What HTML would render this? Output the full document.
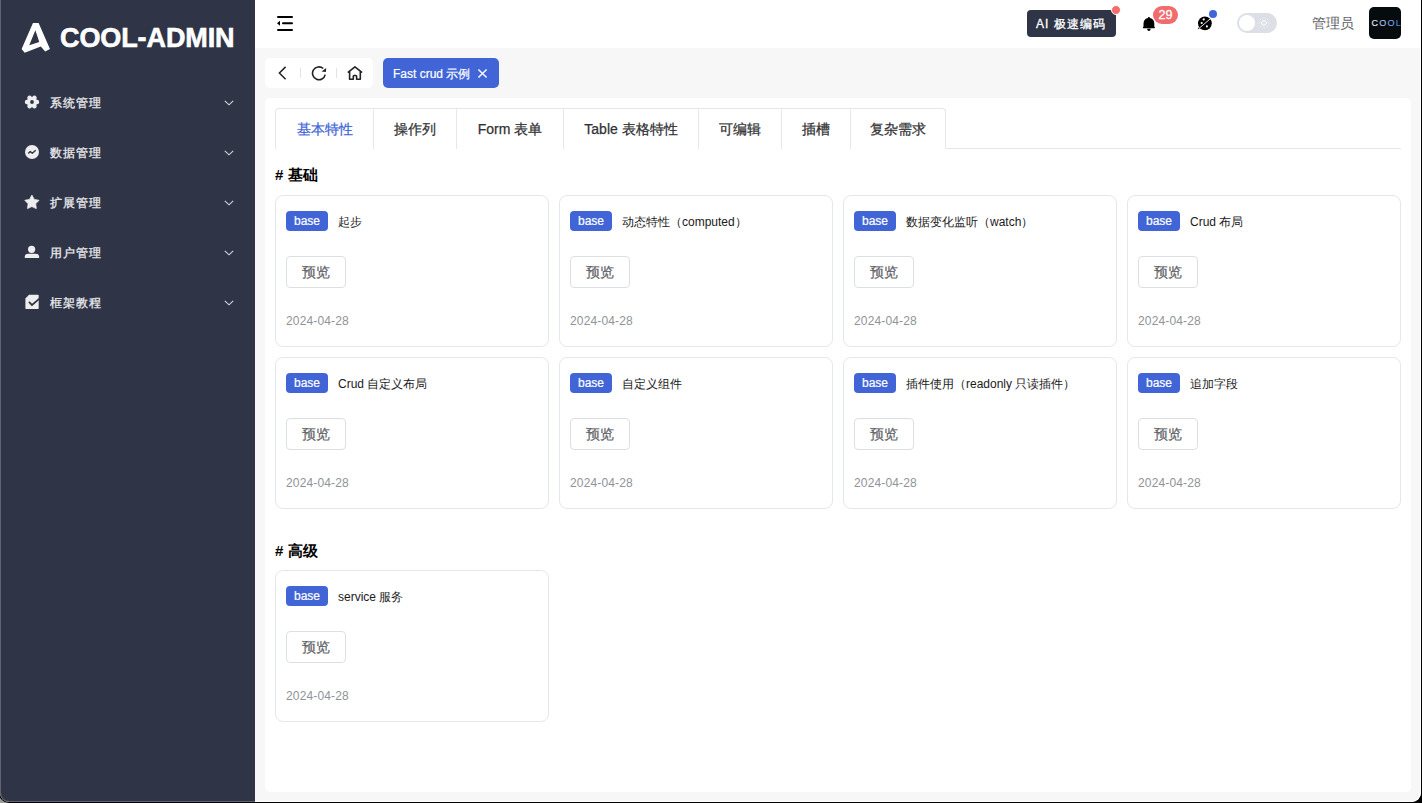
<!DOCTYPE html>
<html><head><meta charset="utf-8">
<style>
*{box-sizing:border-box;margin:0;padding:0}
html,body{width:1422px;height:803px;overflow:hidden;background:#000}
body{font-family:"Liberation Sans",sans-serif;color:#303133;position:relative}
.a{position:absolute}
#win{position:absolute;left:0;top:0;width:1421px;height:802px;border-radius:0 0 9px 9px;overflow:hidden;background:#f7f7f7;box-shadow:0 0 0 1px #000}
#ov{position:absolute;left:0;top:-2px;width:1421px;height:804px;border:1px solid rgba(255,255,255,0.24);border-top:none;border-radius:0 0 9px 9px;z-index:10}
#ov2{position:absolute;left:255px;top:0;width:1166px;height:802px;border-right:1px solid #fff;border-bottom:1px solid #fff;border-radius:0 0 9px 0;z-index:11}
#side{left:0;top:0;width:255px;height:802px;background:#2f3447}
#logo-t{left:60px;top:22.5px;font-size:27px;font-weight:bold;color:#fff;line-height:30px;letter-spacing:-0.1px;-webkit-text-stroke:0.6px #fff}
.mi{left:0;width:255px;height:50px}
.mi .ic{position:absolute;left:24px;top:17px;width:16px;height:16px}
.mi .tx{position:absolute;left:50px;top:0.5px;line-height:50px;font-size:12px;color:#eaeaec;letter-spacing:1px;-webkit-text-stroke:0.3px #eaeaec}
.mi .ar{position:absolute;left:224px;top:23px;width:10px;height:6px}
#head{left:255px;top:0;width:1166px;height:48px;background:#fff}
#rtabs{left:265px;top:58px;width:108px;height:30px;background:#fff;border-radius:5px}
.sep{position:absolute;top:10px;width:1px;height:10px;background:#e4e4e4}
#ctab{left:383px;top:58px;width:116px;height:30px;background:#4165d7;border-radius:5px;color:#fff;font-size:12px;line-height:30px}
#panel{left:265px;top:98px;width:1146px;height:694px;background:#fff;border-radius:5px}
.tabs{left:275px;top:108px;height:41px;border:1px solid #e4e7ed;border-bottom:none;border-radius:4px 4px 0 0;display:flex}
.tab{height:40px;line-height:40px;padding:0;text-align:center;font-size:14px;font-weight:normal;-webkit-text-stroke:0.25px currentColor;color:#303133;border-left:1px solid #e4e7ed;white-space:nowrap}
.tab:first-child{border-left:none}
.tab.on{color:#4165d7}
.tline{top:148px;height:1px;background:#e4e7ed}
.h{font-size:15px;font-weight:bold;color:#000;line-height:20px}
.card{width:274px;height:152px;border:1px solid #e4e7ed;border-radius:8px;background:#fff}
.tag{position:absolute;left:10px;top:15px;height:20px;line-height:20px;padding:0 8px;background:#4165d7;color:#fff;font-size:12px;border-radius:4px;-webkit-text-stroke:0.2px #fff}
.ttl{position:absolute;left:62px;top:16px;line-height:20px;font-size:12px;color:#1a1a1a;white-space:nowrap}
.btn{position:absolute;left:10px;top:60px;width:60px;height:32px;border:1px solid #dcdfe6;border-radius:4px;line-height:30px;text-align:center;font-size:14px;color:#606266;-webkit-text-stroke:0.2px #606266}
.dt{position:absolute;left:10px;top:117px;line-height:16px;font-size:12px;color:#909399;letter-spacing:0.15px}
</style></head><body>
<div class="a" style="left:0;top:792px;width:9px;height:11px;background:#9a9d95"></div>
<div id="win">
  <div id="side" class="a"></div>
  <svg class="a" style="left:0;top:0" width="60" height="60" viewBox="0 0 60 60"><path fill-rule="evenodd" d="M32.95 23.05 L38.62 23.05 L49.95 48.99 L45.16 51.39 L40.8 46.59 L24.67 52.7 L21.62 48.99 Z M35.35 30.24 L29.24 45.28 L39.27 42.01 Z" fill="#fff"/></svg>
  <div id="logo-t" class="a">COOL-ADMIN</div>

    <div class="a mi" style="top:77px">
    <svg class="ic" viewBox="0 0 16 16"><circle cx="8" cy="8" r="5.3" fill="#eee"/><rect x="5.8" y="0.9" width="4.4" height="4.5" rx="2" transform="rotate(30 8 8)" fill="#eee"/><rect x="5.8" y="0.9" width="4.4" height="4.5" rx="2" transform="rotate(90 8 8)" fill="#eee"/><rect x="5.8" y="0.9" width="4.4" height="4.5" rx="2" transform="rotate(150 8 8)" fill="#eee"/><rect x="5.8" y="0.9" width="4.4" height="4.5" rx="2" transform="rotate(210 8 8)" fill="#eee"/><rect x="5.8" y="0.9" width="4.4" height="4.5" rx="2" transform="rotate(270 8 8)" fill="#eee"/><rect x="5.8" y="0.9" width="4.4" height="4.5" rx="2" transform="rotate(330 8 8)" fill="#eee"/><circle cx="8" cy="8" r="1.9" fill="#2f3447"/></svg>
    <div class="tx">系统管理</div>
    <svg class="ar" viewBox="0 0 10 6"><path d="M0.8 0.8 L5 4.8 L9.2 0.8" stroke="#d8d8dc" stroke-width="1.1" fill="none"/></svg>
  </div>
  <div class="a mi" style="top:127px">
    <svg class="ic" viewBox="0 0 16 16"><circle cx="8" cy="8" r="7" fill="#eee"/><path d="M4.25 9.5 L6.3 7.5 L8.3 9.2 L11.7 6.3" stroke="#2f3447" stroke-width="1.4" fill="none" stroke-linejoin="round"/></svg>
    <div class="tx">数据管理</div>
    <svg class="ar" viewBox="0 0 10 6"><path d="M0.8 0.8 L5 4.8 L9.2 0.8" stroke="#d8d8dc" stroke-width="1.1" fill="none"/></svg>
  </div>
  <div class="a mi" style="top:177px">
    <svg class="ic" viewBox="0 0 16 16"><path fill="#eee" stroke="#eee" stroke-width="0.8" stroke-linejoin="round" d="M7.9 1.1 L10.22 5.4 L15.0 6.3 L11.66 9.82 L12.3 14.6 L7.9 12.55 L3.5 14.6 L4.14 9.82 L0.8 6.3 L5.58 5.4 Z"/></svg>
    <div class="tx">扩展管理</div>
    <svg class="ar" viewBox="0 0 10 6"><path d="M0.8 0.8 L5 4.8 L9.2 0.8" stroke="#d8d8dc" stroke-width="1.1" fill="none"/></svg>
  </div>
  <div class="a mi" style="top:227px">
    <svg class="ic" viewBox="0 0 16 16"><circle cx="7.6" cy="5.3" r="3.6" fill="#eee"/><path fill="#eee" d="M0.8 14 L0.8 12.6 Q0.9 9.7 4 9.7 L11.9 9.7 Q15 9.7 15.1 12.6 L15.1 14 Z"/></svg>
    <div class="tx">用户管理</div>
    <svg class="ar" viewBox="0 0 10 6"><path d="M0.8 0.8 L5 4.8 L9.2 0.8" stroke="#d8d8dc" stroke-width="1.1" fill="none"/></svg>
  </div>
  <div class="a mi" style="top:277px">
    <svg class="ic" viewBox="0 0 16 16"><path fill="#eee" d="M5 0.8 L14 0.8 Q14.7 0.8 14.7 1.5 L14.7 14.3 Q14.7 15 14 15 L2.1 15 Q1.4 15 1.4 14.3 L1.4 4.4 Z"/><path d="M5 7.8 L8 11 L15.5 4.6" stroke="#2f3447" stroke-width="1.8" fill="none"/></svg>
    <div class="tx">框架教程</div>
    <svg class="ar" viewBox="0 0 10 6"><path d="M0.8 0.8 L5 4.8 L9.2 0.8" stroke="#d8d8dc" stroke-width="1.1" fill="none"/></svg>
  </div>

  <div id="head" class="a">
    <svg class="a" style="left:22px;top:15px" width="17" height="17" viewBox="0 0 17 17"><rect x="0" y="1" width="16" height="2" rx="1" fill="#000"/><rect x="5" y="7.3" width="11" height="2" rx="1" fill="#000"/><rect x="0" y="14" width="16" height="2" rx="1" fill="#000"/><path d="M0 8.3 L3 5.8 L3 10.8 Z" fill="#000"/></svg>
    <div class="a" style="left:772px;top:10px;width:89px;height:27px;background:#2f3447;border-radius:4px;color:#fff;font-size:12px;line-height:27px;padding-left:9px;padding-top:1px;white-space:nowrap;letter-spacing:1px;-webkit-text-stroke:0.3px #fff">AI 极速编码</div>
    <div class="a" style="left:856px;top:5px;width:10px;height:10px;border-radius:50%;background:#f56c6c;border:1px solid #fff"></div>
    <svg class="a" style="left:887px;top:16px" width="14" height="16" viewBox="0 0 14 16"><path fill="#000" d="M6.9 0.9 Q7.9 0.9 8 1.9 Q12.3 3.0 12.3 7.8 L12.3 10.5 Q12.5 11 12.9 11.2 Q13.1 12.2 12.3 12.2 L1.5 12.2 Q0.7 12.2 0.9 11.2 Q1.3 11 1.5 10.5 L1.5 7.8 Q1.5 3.0 5.8 1.9 Q5.9 0.9 6.9 0.9 Z M5.1 12.7 L8.7 12.7 Q8.5 14.9 6.9 14.9 Q5.3 14.9 5.1 12.7 Z"/></svg>
    <div class="a" style="left:898px;top:6px;width:25px;height:18px;border-radius:9px;background:#f26b6e;color:#fff;font-size:12.5px;line-height:18px;text-align:center;-webkit-text-stroke:0.3px #fff">29</div>
    <svg class="a" style="left:942px;top:15px" width="16" height="16" viewBox="0 0 16 16"><circle cx="7.9" cy="8.3" r="6.9" fill="#000"/><path d="M0.6 14.6 L2.6 11 L4.2 12.6 Z" fill="#000"/><circle cx="6.7" cy="4.4" r="1.1" fill="#fff"/><circle cx="4.7" cy="8" r="1.1" fill="#fff"/><circle cx="9.9" cy="11.4" r="1.05" fill="#fff"/><path d="M2 13.4 L13.8 3.4" stroke="#fff" stroke-width="0.9"/></svg>
    <div class="a" style="left:954px;top:10px;width:8px;height:8px;border-radius:50%;background:#4165d7"></div>
    <div class="a" style="left:982px;top:13px;width:40px;height:20px;border-radius:10px;background:#dcdfe6"></div>
    <div class="a" style="left:984px;top:15px;width:16px;height:16px;border-radius:50%;background:#fff"></div>
    <svg class="a" style="left:1003px;top:17px" width="12" height="12" viewBox="0 0 12 12"><circle cx="6" cy="6" r="2.3" stroke="#fff" stroke-width="1" fill="none"/><path d="M6 0.5 L6 1.8 M6 10.2 L6 11.5 M0.5 6 L1.8 6 M10.2 6 L11.5 6 M2.1 2.1 L3 3 M9 9 L9.9 9.9 M2.1 9.9 L3 9 M9 3 L9.9 2.1" stroke="#fff" stroke-width="0.8"/></svg>
    <div class="a" style="left:1057px;top:14px;font-size:14px;color:#606266;line-height:18px">管理员</div>
    <div class="a" style="left:1114px;top:7px;width:32px;height:32px;border-radius:5px;background:#060b0e;font-size:9px;line-height:33px;letter-spacing:1.25px;padding-left:2.5px;white-space:nowrap;-webkit-text-stroke:0.15px currentColor"><span style="color:#e6ebf0">C</span><span style="color:#a9c3ea">O</span><span style="color:#7aa3e3">O</span><span style="color:#4f82d8">L</span></div>
  </div>
  <div id="rtabs" class="a">
    <svg class="a" style="left:13px;top:8px" width="10" height="15" viewBox="0 0 10 15"><path d="M7.6 0.9 L1.4 7 L7.6 13.2" stroke="#222" stroke-width="1.5" fill="none"/></svg>
    <div class="sep" style="left:35px"></div>
    <svg class="a" style="left:46px;top:8px" width="16" height="16" viewBox="0 0 16 16"><path d="M14.2 8.6 A6.4 6.4 0 1 1 12.2 2.5" stroke="#222" stroke-width="1.6" fill="none"/><path d="M15.2 1.9 L14.9 6.1 L10.5 5.5 Z" fill="#222"/></svg>
    <div class="sep" style="left:71px"></div>
    <svg class="a" style="left:82px;top:8px" width="16" height="16" viewBox="0 0 16 16"><path d="M1.3 6.1 L7.95 0.9 L14.6 6.1 M2.6 5.3 L2.6 13.3 L6.3 13.3 L6.3 10.2 Q6.3 9.5 7 9.5 L8.9 9.5 Q9.6 9.5 9.6 10.2 L9.6 13.3 L13.3 13.3 L13.3 5.3" stroke="#222" stroke-width="1.6" fill="none" stroke-linejoin="round" stroke-linecap="round"/></svg>
  </div>
  <div id="ctab" class="a"><span style="position:absolute;left:10px;top:1px;-webkit-text-stroke:0.2px #fff">Fast crud 示例</span>
    <svg class="a" style="left:94px;top:10px" width="11" height="11" viewBox="0 0 11 11"><path d="M1.4 1.4 L9.6 9.6 M9.6 1.4 L1.4 9.6" stroke="#fff" stroke-width="1.4"/></svg>
  </div>
  <div id="panel" class="a"></div>
  <div class="a tabs">
    <div class="tab on" style="width:97px">基本特性</div><div class="tab" style="width:83px">操作列</div><div class="tab" style="width:107px">Form 表单</div><div class="tab" style="width:135px">Table 表格特性</div><div class="tab" style="width:83px">可编辑</div><div class="tab" style="width:69px">插槽</div><div class="tab" style="width:95px">复杂需求</div>
  </div>
  <div class="a tline" style="left:946px;width:455px"></div>
  <div class="a h" style="left:275px;top:165px"># 基础</div>
<div class="a card" style="left:275px;top:195px"><div class="tag">base</div><div class="ttl">起步</div><div class="btn">预览</div><div class="dt">2024-04-28</div></div>
<div class="a card" style="left:559px;top:195px"><div class="tag">base</div><div class="ttl">动态特性（computed）</div><div class="btn">预览</div><div class="dt">2024-04-28</div></div>
<div class="a card" style="left:843px;top:195px"><div class="tag">base</div><div class="ttl">数据变化监听（watch）</div><div class="btn">预览</div><div class="dt">2024-04-28</div></div>
<div class="a card" style="left:1127px;top:195px"><div class="tag">base</div><div class="ttl">Crud 布局</div><div class="btn">预览</div><div class="dt">2024-04-28</div></div>
<div class="a card" style="left:275px;top:357px"><div class="tag">base</div><div class="ttl">Crud 自定义布局</div><div class="btn">预览</div><div class="dt">2024-04-28</div></div>
<div class="a card" style="left:559px;top:357px"><div class="tag">base</div><div class="ttl">自定义组件</div><div class="btn">预览</div><div class="dt">2024-04-28</div></div>
<div class="a card" style="left:843px;top:357px"><div class="tag">base</div><div class="ttl">插件使用（readonly 只读插件）</div><div class="btn">预览</div><div class="dt">2024-04-28</div></div>
<div class="a card" style="left:1127px;top:357px"><div class="tag">base</div><div class="ttl">追加字段</div><div class="btn">预览</div><div class="dt">2024-04-28</div></div>
<div class="a h" style="left:275px;top:541px"># 高级</div>
<div class="a card" style="left:275px;top:570px"><div class="tag">base</div><div class="ttl">service 服务</div><div class="btn">预览</div><div class="dt">2024-04-28</div></div>

<div id="ov"></div><div id="ov2"></div>
</div>
</body></html>
